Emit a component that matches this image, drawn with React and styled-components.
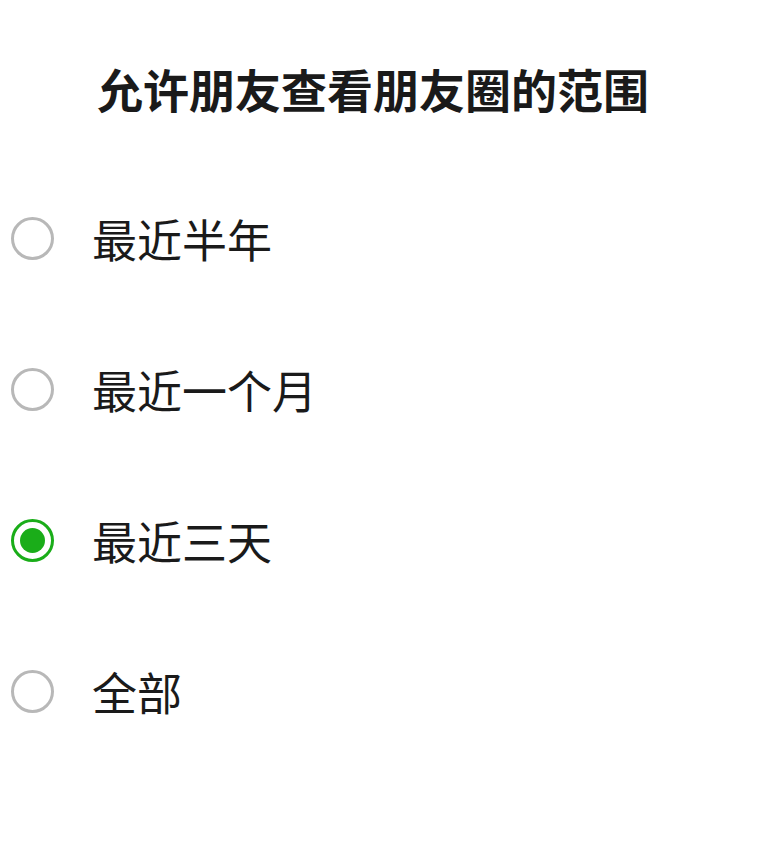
import React, { useState } from "react";
import styled, { createGlobalStyle } from "styled-components";

const Global = createGlobalStyle`
  html, body { margin: 0; padding: 0; background: #ffffff; }
  body { font-family: "Noto Sans CJK SC", "Noto Sans", sans-serif; }
`;

const Page = styled.div`
  padding-top: 65px;
  width: 761px;
  height: 842px;
  box-sizing: border-box;
  background: #fff;
`;

const Title = styled.h1`
  margin: 0;
  padding-left: 97px;
  font-size: 46px;
  line-height: 46px;
  font-weight: 700;
  color: #1a1a1a;
  letter-spacing: 0;
`;

const List = styled.div`
  margin-top: 52px;
  display: flex;
  flex-direction: column;
`;

const Row = styled.label`
  display: flex;
  align-items: center;
  height: 151px;
  padding-left: 11px;
  gap: 38px;
  cursor: pointer;
`;

const Radio = styled.span`
  box-sizing: border-box;
  width: 43px;
  height: 43px;
  border-radius: 50%;
  border: 3px solid ${(p) => (p.$checked ? "#1aad19" : "#b8b8b8")};
  display: flex;
  align-items: center;
  justify-content: center;
  flex-shrink: 0;
  &::after {
    content: "";
    display: ${(p) => (p.$checked ? "block" : "none")};
    width: 25px;
    height: 25px;
    border-radius: 50%;
    background: #1aad19;
  }
`;

const Text = styled.span`
  font-size: 45px;
  line-height: 45px;
  color: #1a1a1a;
  font-weight: 400;
`;

const options = ["最近半年", "最近一个月", "最近三天", "全部"];

export default function App() {
  const [sel, setSel] = useState(2);
  return (
    <>
      <Global />
      <Page>
        <Title>允许朋友查看朋友圈的范围</Title>
        <List>
          {options.map((o, i) => (
            <Row key={o} onClick={() => setSel(i)}>
              <Radio $checked={sel === i} />
              <Text>{o}</Text>
            </Row>
          ))}
        </List>
      </Page>
    </>
  );
}
